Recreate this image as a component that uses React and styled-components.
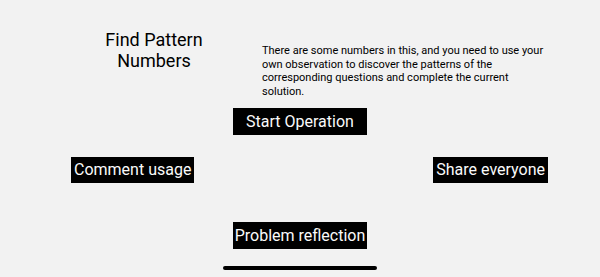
import React from "react";
import styled, { createGlobalStyle } from "styled-components";

const Global = createGlobalStyle`
  html, body { margin: 0; padding: 0; background: #f2f2f2; }
  body { font-family: Roboto, "Liberation Sans", Arial, sans-serif; color: #000; }
`;

const Page = styled.div`
  width: 600px;
  height: 277px;
  display: flex;
  flex-direction: column;
  background: #f2f2f2;
  overflow: hidden;
`;

const Header = styled.div`
  display: flex;
  align-items: flex-start;
  padding-top: 29px;
  height: 69px;
`;

const Title = styled.h1`
  margin: 0 0 0 94px;
  width: 120px;
  font-size: 18px;
  line-height: 21px;
  font-weight: 400;
  text-align: center;
`;

const Intro = styled.p`
  margin: 15px 0 0 48px;
  width: 288px;
  font-size: 11px;
  line-height: 13.5px;
`;

const Button = styled.button`
  border: none;
  border-radius: 0;
  background: #000;
  color: #fafafa;
  font-family: Roboto, "Liberation Sans", Arial, sans-serif;
  font-size: 16px;
  line-height: ${(p) => (p.$wide ? "27px" : "26px")};
  height: ${(p) => (p.$wide ? "27px" : "26px")};
  padding: 0 ${(p) => (p.$wide ? "0" : "3px")};
  width: ${(p) => (p.$wide ? "134px" : "auto")};
  align-self: ${(p) => (p.$wide ? "center" : "auto")};
  margin-top: ${(p) => p.$top || 0}px;
  cursor: pointer;
`;

const SideRow = styled.div`
  display: flex;
  justify-content: space-between;
  padding: 0 52px 0 71px;
  margin-top: 22px;
`;

const HomeBar = styled.div`
  align-self: center;
  width: 154px;
  height: 4px;
  border-radius: 2px;
  background: #000;
  margin-top: 17px;
`;

export default function App() {
  return (
    <>
      <Global />
      <Page>
        <Header>
          <Title>Find Pattern Numbers</Title>
          <Intro>
            There are some numbers in this, and you need to use your own observation to discover
            the patterns of the corresponding questions and complete the current solution.
          </Intro>
        </Header>
        <Button $wide $top={10}>Start Operation</Button>
        <SideRow>
          <Button>Comment usage</Button>
          <Button>Share everyone</Button>
        </SideRow>
        <Button $wide $top={39}>Problem reflection</Button>
        <HomeBar />
      </Page>
    </>
  );
}
